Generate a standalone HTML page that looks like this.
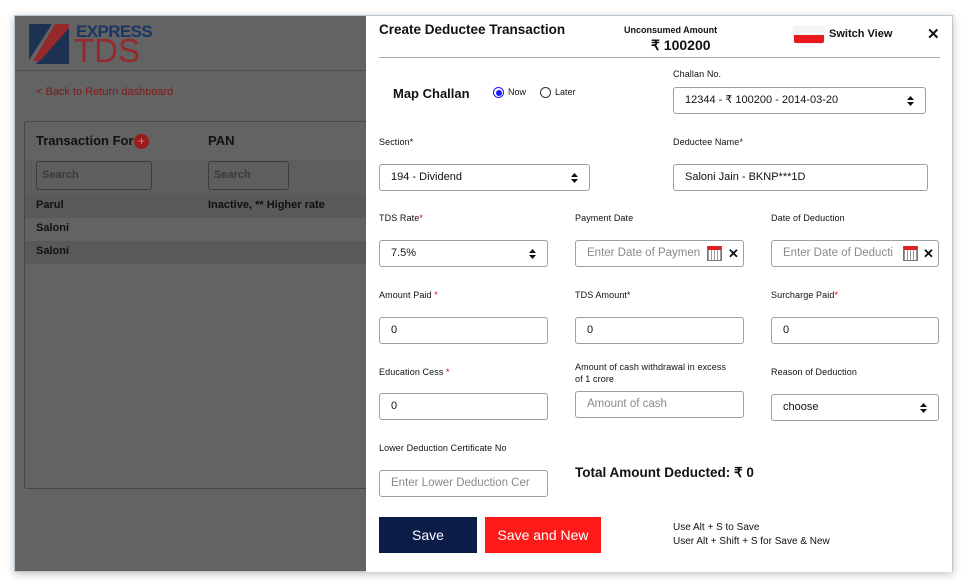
<!DOCTYPE html>
<html><head><meta charset="utf-8"><style>
*{box-sizing:border-box;margin:0;padding:0}
body{width:968px;height:582px;background:#fff;position:relative;overflow:hidden;font-family:"Liberation Sans",sans-serif;color:#111}
.a{position:absolute;white-space:nowrap}
.frame{position:absolute;left:14px;top:15px;width:939px;height:557px;background:#636363;border:1px solid #b9c6d3;box-shadow:0 2px 8px rgba(0,0,0,.25);overflow:hidden}
.lbl{position:absolute;font-size:9px;color:#111;white-space:nowrap;letter-spacing:0.1px}
.req{color:#e00}
.in{position:absolute;height:27px;border:1px solid #9aa0a6;border-radius:3px;background:#fff;font-size:11px;padding-left:11px;line-height:25px;color:#111;white-space:nowrap;overflow:hidden}
.ph{color:#8a8a8a;font-size:11.5px}
.arr{position:absolute;right:11px;top:8px;width:7px;height:10px}
.cal{position:absolute;width:15px;height:15px;top:5px;background:#fff;border:1px solid #777;border-top:4px solid #d22;background-image:repeating-linear-gradient(90deg,#999 0 1px,transparent 1px 3px)}
.x{position:absolute;font-size:13px;font-weight:bold;top:0}
</style></head><body>
<div class="frame"></div>
<div class="a" style="left:15px;top:70px;width:351px;height:1px;background:#4e4e4e"></div>
<svg class="a" style="left:28px;top:23px" width="42" height="42" viewBox="0 0 42 42">
<rect x="1" y="1" width="40" height="40" fill="#1d3153"/>
<polygon points="24,1 41,1 41,4 8,41 1,41 1,37" fill="#636363"/>
<polygon points="27,1 41,1 41,5 12,38 5,38" fill="#97282b"/>
</svg>
<div class="a" style="left:76px;top:22px;font-size:17px;font-weight:bold;color:#1c3663;letter-spacing:-0.6px">EXPRESS</div>
<div class="a" style="left:74px;top:34px;font-size:33px;color:#97282b;letter-spacing:0px;line-height:33px">TDS</div>
<div class="a" style="left:36px;top:86px;font-size:11px;color:#7e1b1b">&lt; Back to Return dashboard</div>
<div class="a" style="left:24px;top:121px;width:345px;height:368px;border:1px solid #474747;border-right:none;border-radius:3px 0 0 3px"></div>
<div class="a" style="left:25px;top:160px;width:341px;height:35px;background:#5e5e5e"></div>
<div class="a" style="left:25px;top:195px;width:341px;height:23px;background:#595959"></div>
<div class="a" style="left:25px;top:241px;width:341px;height:23px;background:#595959"></div>
<div class="a" style="left:36px;top:133px;font-size:13px;color:#111;font-weight:bold">Transaction For</div>
<div class="a" style="left:134px;top:134px;width:15px;height:15px;border-radius:50%;background:#9a1c1c;color:#c88;font-size:12px;line-height:14px;text-align:center">+</div>
<div class="a" style="left:208px;top:133px;font-size:13px;color:#111;font-weight:bold">PAN</div>
<div class="a" style="left:36px;top:161px;width:116px;height:29px;border:1px solid #3d3d3d;border-radius:3px;font-size:11px;color:#3a3a3a;padding:7px 5px;font-weight:bold">Search</div>
<div class="a" style="left:208px;top:161px;width:81px;height:29px;border:1px solid #3d3d3d;border-radius:3px;font-size:11px;color:#3a3a3a;padding:7px 5px;font-weight:bold">Search</div>
<div class="a" style="left:36px;top:199px;font-size:11px;color:#111;font-weight:bold">Parul</div>
<div class="a" style="left:208px;top:199px;font-size:11px;color:#111;font-weight:bold">Inactive, ** Higher rate</div>
<div class="a" style="left:36px;top:222px;font-size:11px;color:#111;font-weight:bold">Saloni</div>
<div class="a" style="left:36px;top:245px;font-size:11px;color:#111;font-weight:bold">Saloni</div>

<div class="a" style="left:366px;top:16px;width:586px;height:556px;background:#fff"></div>
<div class="a" style="left:379px;top:22px;font-size:13.5px;font-weight:bold;color:#111">Create Deductee Transaction</div>
<div class="a" style="left:624px;top:25px;font-size:9px;color:#111;font-weight:bold">Unconsumed Amount</div>
<div class="a" style="left:651px;top:37px;font-size:14px;color:#111;font-weight:bold">₹ 100200</div>
<div class="a" style="left:794px;top:27px;width:30px;height:16px;border-radius:2px;background:linear-gradient(#f4f4f4 0 50%,#e8181c 50%);box-shadow:0 0 1px #999"></div>
<div class="a" style="left:829px;top:28px;font-size:11px;color:#111;font-weight:bold">Switch View</div>
<div class="a" style="left:927px;top:25px;font-size:15px;font-weight:bold">✕</div>
<div class="a" style="left:379px;top:57px;width:561px;height:1px;background:#aaa"></div>

<div class="a" style="left:393px;top:86px;font-size:13px;font-weight:bold;color:#111">Map Challan</div>
<div class="a" style="left:493px;top:87px;width:11px;height:11px;border-radius:50%;border:1px solid #1a1aff;background:#fff"><div style="margin:1.5px;width:6px;height:6px;border-radius:50%;background:#1a1aff"></div></div>
<div class="a" style="left:508px;top:87px;font-size:9px">Now</div>
<div class="a" style="left:540px;top:87px;width:11px;height:11px;border-radius:50%;border:1px solid #333"></div>
<div class="a" style="left:555px;top:87px;font-size:9px">Later</div>

<div class="lbl" style="left:673px;top:69px">Challan No.</div>
<div class="in" style="left:673px;top:87px;width:253px">12344 - ₹ 100200 - 2014-03-20<svg class="arr" viewBox="0 0 7 10"><path d="M0 4L3.5 0L7 4ZM0 6L3.5 10L7 6Z" fill="#111"/></svg></div>

<div class="lbl" style="left:379px;top:137px">Section*</div>
<div class="in" style="left:379px;top:164px;width:211px">194 - Dividend<svg class="arr" viewBox="0 0 7 10"><path d="M0 4L3.5 0L7 4ZM0 6L3.5 10L7 6Z" fill="#111"/></svg></div>
<div class="lbl" style="left:673px;top:137px">Deductee Name*</div>
<div class="in" style="left:673px;top:164px;width:255px">Saloni Jain - BKNP***1D</div>

<div class="lbl" style="left:379px;top:213px">TDS Rate<span class="req">*</span></div>
<div class="in" style="left:379px;top:240px;width:169px">7.5%<svg class="arr" viewBox="0 0 7 10"><path d="M0 4L3.5 0L7 4ZM0 6L3.5 10L7 6Z" fill="#111"/></svg></div>
<div class="lbl" style="left:575px;top:213px">Payment Date</div>
<div class="in" style="left:575px;top:240px;width:169px"><span class="ph">Enter Date of Paymen</span><span class="cal" style="left:131px"></span><span class="x" style="left:152px">✕</span></div>
<div class="lbl" style="left:771px;top:213px">Date of Deduction</div>
<div class="in" style="left:771px;top:240px;width:168px"><span class="ph">Enter Date of Deducti</span><span class="cal" style="left:131px"></span><span class="x" style="left:151px">✕</span></div>

<div class="lbl" style="left:379px;top:290px">Amount Paid <span class="req">*</span></div>
<div class="in" style="left:379px;top:317px;width:169px">0</div>
<div class="lbl" style="left:575px;top:290px">TDS Amount*</div>
<div class="in" style="left:575px;top:317px;width:169px">0</div>
<div class="lbl" style="left:771px;top:290px">Surcharge Paid<span class="req">*</span></div>
<div class="in" style="left:771px;top:317px;width:168px">0</div>

<div class="lbl" style="left:379px;top:367px">Education Cess <span class="req">*</span></div>
<div class="in" style="left:379px;top:393px;width:169px">0</div>
<div class="lbl" style="left:575px;top:361px;line-height:12px">Amount of cash withdrawal in excess<br>of 1 crore</div>
<div class="in" style="left:575px;top:391px;width:169px"><span class="ph">Amount of cash</span></div>
<div class="lbl" style="left:771px;top:367px">Reason of Deduction</div>
<div class="in" style="left:771px;top:394px;width:168px">choose<svg class="arr" viewBox="0 0 7 10"><path d="M0 4L3.5 0L7 4ZM0 6L3.5 10L7 6Z" fill="#111"/></svg></div>

<div class="lbl" style="left:379px;top:443px">Lower Deduction Certificate No</div>
<div class="in" style="left:379px;top:470px;width:169px"><span class="ph">Enter Lower Deduction Cer</span></div>
<div class="a" style="left:575px;top:465px;font-size:13.5px;font-weight:bold;color:#111">Total Amount Deducted: ₹ 0</div>

<div class="a" style="left:379px;top:517px;width:98px;height:36px;background:#0b1c48;color:#fff;font-size:14px;text-align:center;line-height:36px">Save</div>
<div class="a" style="left:485px;top:517px;width:116px;height:36px;background:#ff1a1a;color:#fff;font-size:14px;text-align:center;line-height:36px">Save and New</div>
<div class="a" style="left:673px;top:521px;font-size:10px;line-height:14px;color:#111">Use Alt + S to Save<br>User Alt + Shift + S for Save &amp; New</div>
</body></html>
